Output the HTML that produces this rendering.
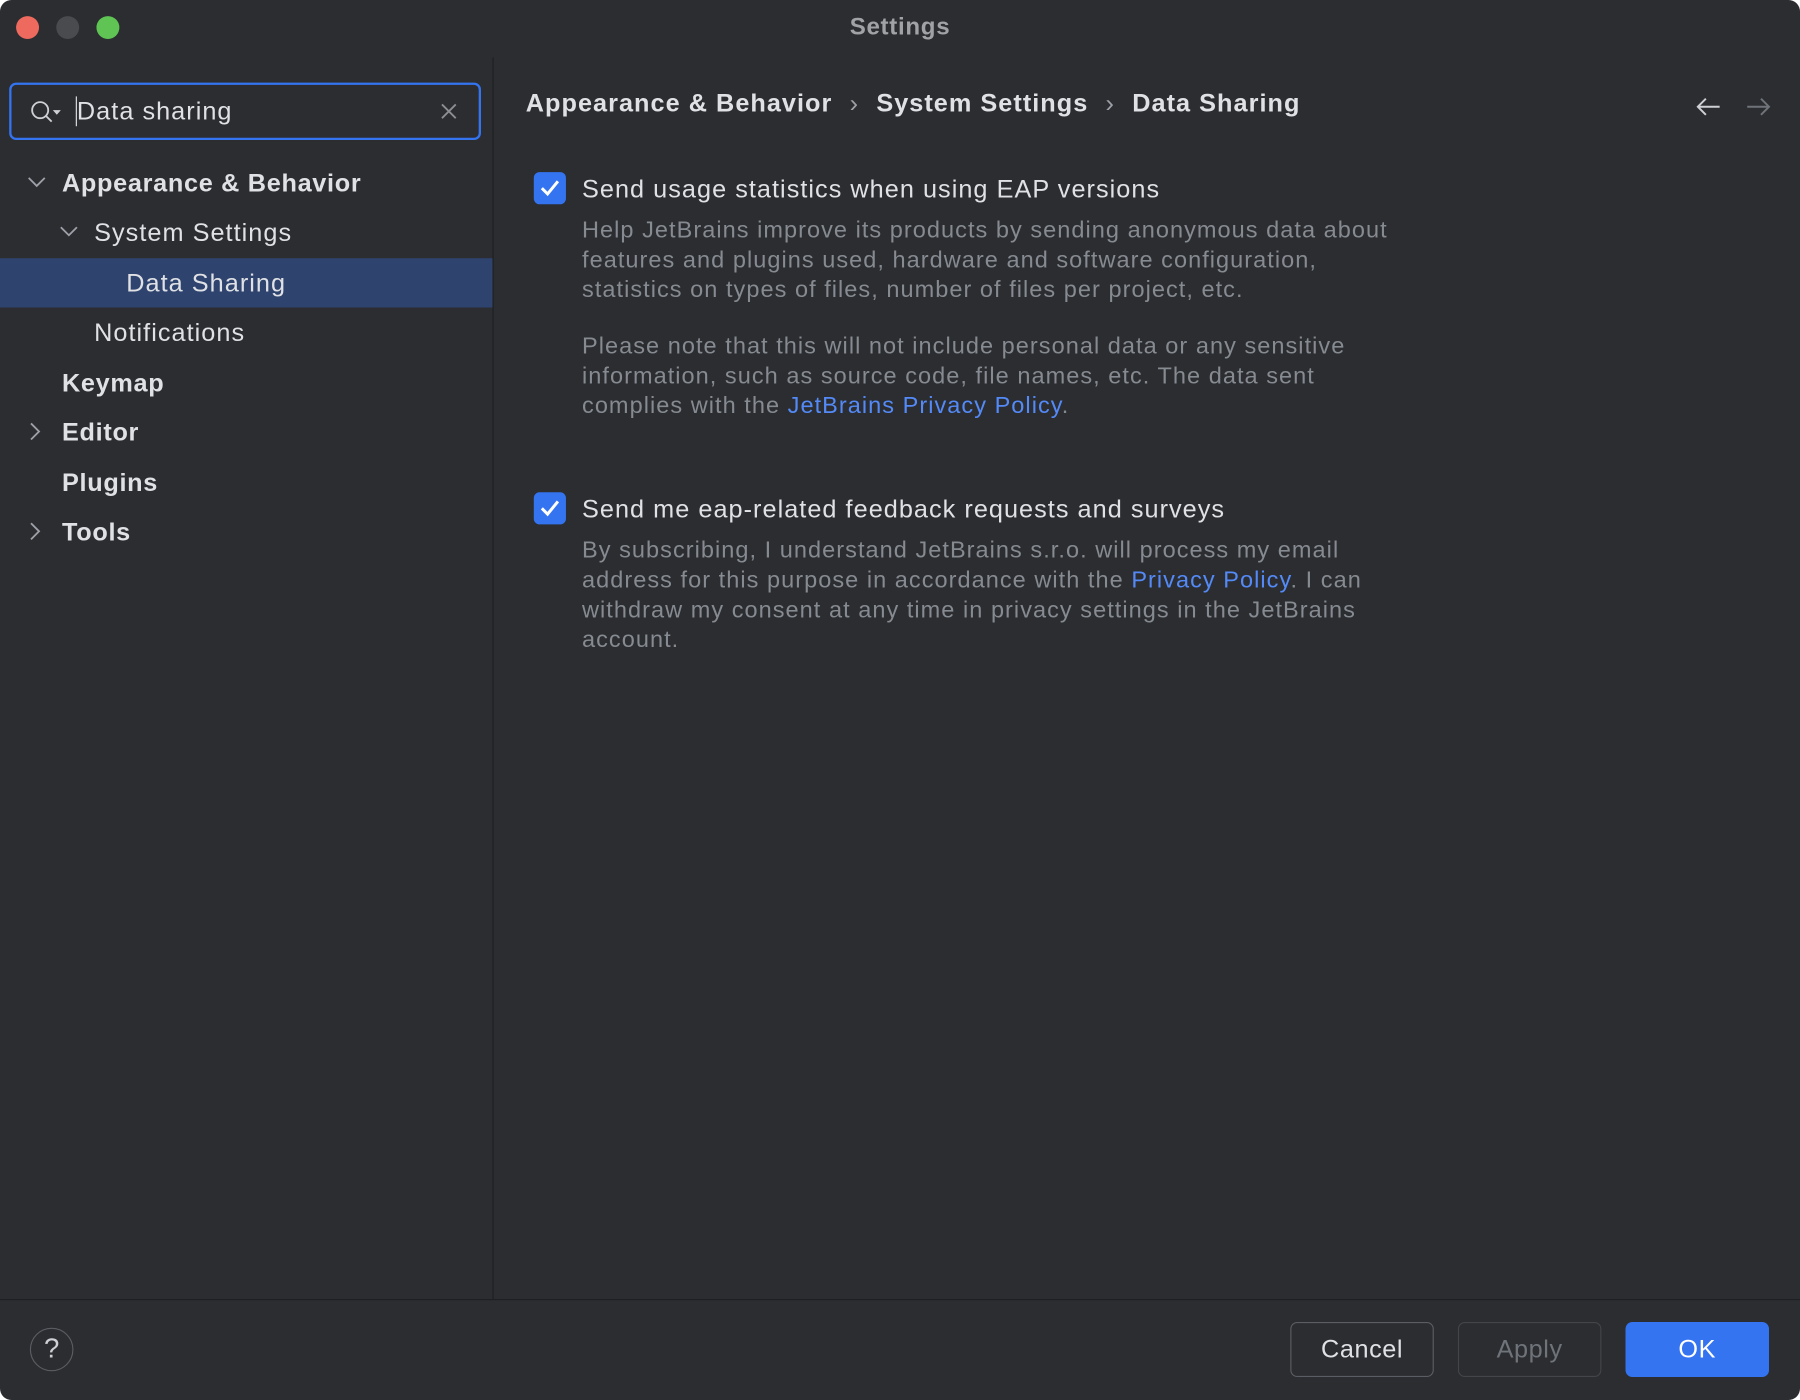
<!DOCTYPE html>
<html><head><meta charset="utf-8"><style>
html,body{margin:0;padding:0;background:#fff;width:1800px;height:1400px;overflow:hidden}
#w{position:absolute;left:0;top:0;width:1568px;height:1220px;transform:scale(1.14796,1.14754);transform-origin:0 0;background:#2b2d30;border-radius:10px;overflow:hidden;font-family:"Liberation Sans",sans-serif;color:#dfe1e5}
.a{position:absolute;white-space:nowrap}
.dot{position:absolute;width:20px;height:20px;border-radius:50%;top:14px}
.t{font-size:22px;line-height:26px;letter-spacing:0.9px}
.b{font-weight:bold;letter-spacing:0.6px}
.g{color:#868a91;font-size:20.5px;line-height:26px;letter-spacing:0.9px}
.lk{color:#548af7}
.cb{position:absolute;width:28px;height:28px;border-radius:5px;background:#3574f0}
.btn{position:absolute;top:1152px;height:48px;border-radius:6px;box-sizing:border-box;font-size:22px;line-height:46px;text-align:center;letter-spacing:0.5px}
</style></head><body><div id="w">
<div class="dot" style="left:14px;background:#ee6a5f"></div>
<div class="dot" style="left:49px;background:#4a4b4e"></div>
<div class="dot" style="left:84px;background:#5fc454"></div>
<div class="a b" style="left:0;width:1568px;text-align:center;top:12px;font-size:21px;color:#a0a2a6">Settings</div>

<div class="a" style="left:429px;top:50px;width:1px;height:1082px;background:#1e1f22"></div>
<div class="a" style="left:0;top:1132px;width:1568px;height:1px;background:#1e1f22"></div>

<div class="a" style="left:8px;top:72px;width:411px;height:50px;border:2px solid #3574f0;border-radius:6px;box-sizing:border-box"></div>
<svg class="a" style="left:24px;top:84px" width="34" height="26" viewBox="0 0 34 26"><circle cx="11" cy="12" r="7" fill="none" stroke="#ced0d6" stroke-width="1.6"/><path d="M16 17l5 5" stroke="#ced0d6" stroke-width="1.6"/><path d="M22 12h7l-3.5 4z" fill="#ced0d6"/></svg>
<div class="a" style="left:66px;top:84px;width:1px;height:26px;background:#dfe1e5"></div>
<div class="a t" style="left:67px;top:84px">Data sharing</div>
<svg class="a" style="left:384px;top:90px" width="14" height="14"><path d="M1 1l12 12M13 1L1 13" stroke="#8c8e93" stroke-width="1.6"/></svg>

<div class="a" style="left:0;top:225px;width:429px;height:43px;background:#2e436e"></div>
<svg class="a" style="left:24px;top:153px" width="16" height="12"><path d="M1 2l7 7 7-7" fill="none" stroke="#9da0a8" stroke-width="1.6"/></svg>
<div class="a t b" style="left:54px;top:147px">Appearance &amp; Behavior</div>
<svg class="a" style="left:52px;top:196px" width="16" height="12"><path d="M1 2l7 7 7-7" fill="none" stroke="#9da0a8" stroke-width="1.6"/></svg>
<div class="a t" style="left:82px;top:190px">System Settings</div>
<div class="a t" style="left:110px;top:234px">Data Sharing</div>
<div class="a t" style="left:82px;top:277px">Notifications</div>
<div class="a t b" style="left:54px;top:321px">Keymap</div>
<svg class="a" style="left:25px;top:368px" width="12" height="16"><path d="M2 1l7 7-7 7" fill="none" stroke="#9da0a8" stroke-width="1.6"/></svg>
<div class="a t b" style="left:54px;top:364px">Editor</div>
<div class="a t b" style="left:54px;top:408px">Plugins</div>
<svg class="a" style="left:25px;top:455px" width="12" height="16"><path d="M2 1l7 7-7 7" fill="none" stroke="#9da0a8" stroke-width="1.6"/></svg>
<div class="a t b" style="left:54px;top:451px">Tools</div>

<div class="a t b" style="left:458px;top:77px;letter-spacing:0.9px">Appearance &amp; Behavior <span style="font-weight:normal;color:#9da0a8;padding:0 8px">›</span> System Settings <span style="font-weight:normal;color:#9da0a8;padding:0 8px">›</span> Data Sharing</div>
<svg class="a" style="left:1476px;top:84px" width="24" height="18"><path d="M22 9H3M10 2L3 9l7 7" fill="none" stroke="#ced0d6" stroke-width="1.7"/></svg>
<svg class="a" style="left:1520px;top:84px" width="24" height="18"><path d="M2 9h19M14 2l7 7-7 7" fill="none" stroke="#6f737a" stroke-width="1.7"/></svg>

<div class="cb" style="left:465px;top:150px"></div>
<svg class="a" style="left:465px;top:150px" width="28" height="28"><path d="M7 14l5 5 9-11" fill="none" stroke="#fff" stroke-width="2.6"/></svg>
<div class="a t" style="left:507px;top:152px">Send usage statistics when using EAP versions</div>
<div class="a g" style="left:507px;top:188px">Help JetBrains improve its products by sending anonymous data about<br>features and plugins used, hardware and software configuration,<br>statistics on types of files, number of files per project, etc.</div>
<div class="a g" style="left:507px;top:289px">Please note that this will not include personal data or any sensitive<br>information, such as source code, file names, etc. The data sent<br>complies with the <span class="lk">JetBrains Privacy Policy</span>.</div>

<div class="cb" style="left:465px;top:429px"></div>
<svg class="a" style="left:465px;top:429px" width="28" height="28"><path d="M7 14l5 5 9-11" fill="none" stroke="#fff" stroke-width="2.6"/></svg>
<div class="a t" style="left:507px;top:431px">Send me eap-related feedback requests and surveys</div>
<div class="a g" style="left:507px;top:467px">By subscribing, I understand JetBrains s.r.o. will process my email<br>address for this purpose in accordance with the <span class="lk">Privacy Policy</span>. I can<br>withdraw my consent at any time in privacy settings in the JetBrains<br>account.</div>

<div class="a" style="left:26px;top:1157px;width:38px;height:38px;border:1.5px solid #5a5d63;border-radius:50%;box-sizing:border-box;text-align:center;font-size:24px;line-height:36px;color:#ced0d6">?</div>
<div class="btn" style="left:1124px;width:125px;border:1.5px solid #5a5d63">Cancel</div>
<div class="btn" style="left:1270px;width:125px;border:1.5px solid #43454a;color:#6f737a">Apply</div>
<div class="btn" style="left:1416px;width:125px;background:#3574f0;color:#fff;line-height:48px">OK</div>
</div></body></html>
